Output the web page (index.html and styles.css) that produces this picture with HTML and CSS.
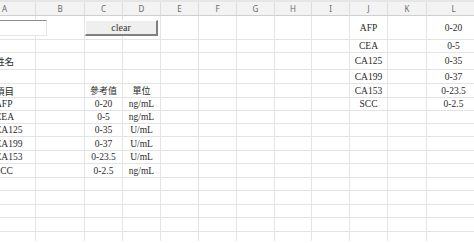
FILE: index.html
```html
<!DOCTYPE html>
<html>
<head>
<meta charset="utf-8">
<link rel="stylesheet" href="styles.css">
</head>
<body>
<div class="sheet">
  <div class="row hdr"><span class="ha">A</span><span>B</span><span>C</span><span>D</span><span>E</span><span>F</span><span>G</span><span>H</span><span>I</span><span>J</span><span>K</span><span>L</span></div>
  <div class="row h24"><span></span><span></span><span></span><span></span><span></span><span></span><span></span><span></span><span></span><span>AFP</span><span></span><span>0-20</span></div>
  <div class="row h13"><span></span><span></span><span></span><span></span><span></span><span></span><span></span><span></span><span></span><span>CEA</span><span></span><span>0-5</span></div>
  <div class="row h17"><span class="a"><em>姓名</em></span><span></span><span></span><span></span><span></span><span></span><span></span><span></span><span></span><span>CA125</span><span></span><span>0-35</span></div>
  <div class="row h14"><span></span><span></span><span></span><span></span><span></span><span></span><span></span><span></span><span></span><span>CA199</span><span></span><span>0-37</span></div>
  <div class="row h14"><span class="a"><em>項目</em></span><span></span><span class="cjk">參考值</span><span class="cjk">單位</span><span></span><span></span><span></span><span></span><span></span><span>CA153</span><span></span><span>0-23.5</span></div>
  <div class="row h13"><span class="a"><em>AFP</em></span><span></span><span>0-20</span><span>ng/mL</span><span></span><span></span><span></span><span></span><span></span><span>SCC</span><span></span><span>0-2.5</span></div>
  <div class="row h13"><span class="a"><em>CEA</em></span><span></span><span>0-5</span><span>ng/mL</span><span></span><span></span><span></span><span></span><span></span><span></span><span></span><span></span></div>
  <div class="row h13"><span class="a"><em>CA125</em></span><span></span><span>0-35</span><span>U/mL</span><span></span><span></span><span></span><span></span><span></span><span></span><span></span><span></span></div>
  <div class="row h14"><span class="a"><em>CA199</em></span><span></span><span>0-37</span><span>U/mL</span><span></span><span></span><span></span><span></span><span></span><span></span><span></span><span></span></div>
  <div class="row h13"><span class="a"><em>CA153</em></span><span></span><span>0-23.5</span><span>U/mL</span><span></span><span></span><span></span><span></span><span></span><span></span><span></span><span></span></div>
  <div class="row h14"><span class="a"><em>SCC</em></span><span></span><span>0-2.5</span><span>ng/mL</span><span></span><span></span><span></span><span></span><span></span><span></span><span></span><span></span></div>
  <div class="row h13"><span></span><span></span><span></span><span></span><span></span><span></span><span></span><span></span><span></span><span></span><span></span><span></span></div>
  <div class="row h14"><span></span><span></span><span></span><span></span><span></span><span></span><span></span><span></span><span></span><span></span><span></span><span></span></div>
  <div class="row h13"><span></span><span></span><span></span><span></span><span></span><span></span><span></span><span></span><span></span><span></span><span></span><span></span></div>
  <div class="row h14"><span></span><span></span><span></span><span></span><span></span><span></span><span></span><span></span><span></span><span></span><span></span><span></span></div>
  <div class="row h9 last"><span></span><span></span><span></span><span></span><span></span><span></span><span></span><span></span><span></span><span></span><span></span><span></span></div>

  <div class="textbox"></div>
  <div class="button">clear</div>
</div>
</body>
</html>
```

FILE: styles.css
```css
html, body {
  margin: 0;
  padding: 0;
  background: #ffffff;
  overflow: hidden;
}

.sheet {
  position: relative;
  width: 481px;
  font-family: "Liberation Serif", "Noto Sans CJK TC", serif;
  font-size: 9.5px;
  color: #2a2a2a;
}

.row {
  display: grid;
  grid-template-columns: 36px 49px 38px 38px 38px 38px 38px 37px 38px 38px 39px 54px;
}

.row > span {
  box-sizing: border-box;
  border-right: 1px solid #e4e4e4;
  border-bottom: 1px solid #e4e4e4;
  display: flex;
  align-items: center;
  justify-content: center;
  overflow: hidden;
  white-space: nowrap;
}

.row > span.a {
  justify-content: flex-start;
}

.row > span.a em {
  font-style: normal;
  margin-left: -5px;
}

.cjk {
  font-size: 9px;
}

.hdr {
  height: 16px;
  background: #f3f3f3;
  border-top: 2px solid #e6e6e6;
  box-sizing: border-box;
}

.hdr > span {
  font-family: "Noto Sans", "DejaVu Sans", sans-serif;
  font-size: 8px;
  color: #6a6a6a;
  border-right: 1px solid #dedede;
  border-bottom: 1px solid #cfcfcf;
}

.hdr > span.ha {
  justify-content: flex-start;
  padding-left: 2px;
}

.h24 { height: 24px; }
.h13 { height: 13px; }
.h14 { height: 14px; }
.h17 { height: 17px; }
.h9 { height: 9px; }

.last > span {
  border-bottom: none;
}

.textbox {
  position: absolute;
  left: 0;
  top: 20px;
  width: 47px;
  height: 16px;
  box-sizing: border-box;
  background: #ffffff;
  border-top: 1px solid #8c8c8c;
  border-right: 1px solid #e6e6e6;
  border-bottom: 1px solid #e6e6e6;
}

.button {
  position: absolute;
  left: 85px;
  top: 20px;
  width: 73px;
  height: 16px;
  box-sizing: border-box;
  background: #efefef;
  border-top: 1px solid #ffffff;
  border-left: 1px solid #ffffff;
  border-right: 2px solid #808080;
  border-bottom: 2px solid #808080;
  display: flex;
  align-items: center;
  justify-content: center;
  font-family: "Liberation Serif", serif;
  font-size: 10px;
  color: #333333;
}
```
